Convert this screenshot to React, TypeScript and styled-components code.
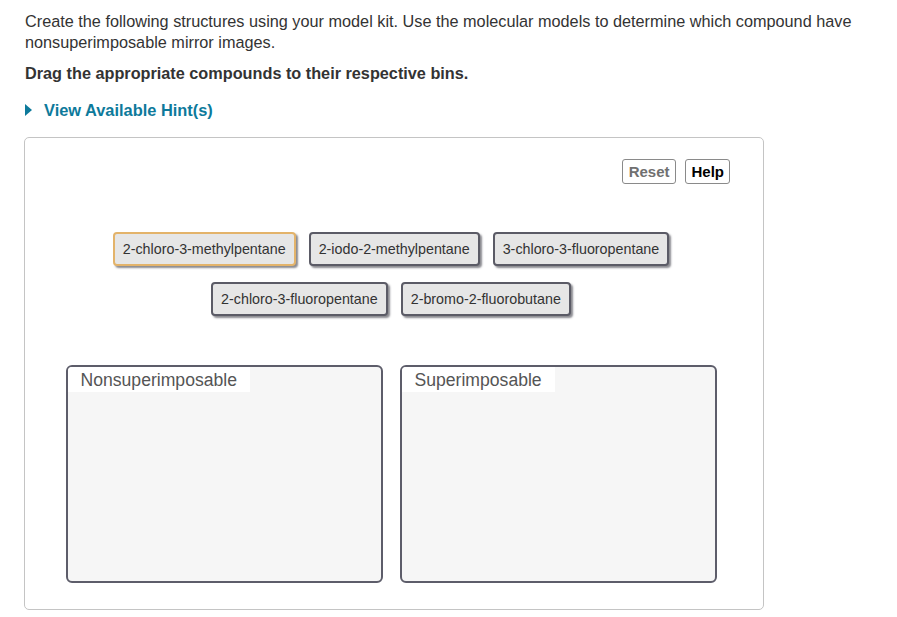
import React from 'react';
import styled, { createGlobalStyle } from 'styled-components';

const GlobalStyle = createGlobalStyle`
    body {
        margin: 0;
        background: #ffffff;
        font-family: "Liberation Sans", Arial, sans-serif;
        color: #333333;
    }
`

const Page = styled.div`
    padding: 11px 24px 8px 25px;
`

const Intro = styled.p`
    margin: 0;
    font-size: 16.25px;
    line-height: 21px;
    width: 840px;
`

const Instruction = styled.p`
    margin: 10px 0 0 0;
    font-size: 16.25px;
    font-weight: bold;
    line-height: 21px;
`

const Hint = styled.div`
    display: flex;
    align-items: center;
    gap: 12px;
    margin-top: 16px;
    color: #0d7a9b;
    font-size: 16.4px;
    font-weight: bold;
    line-height: 21px;
    cursor: pointer;
`

const Arrow = styled.span`
    width: 0;
    height: 0;
    border-top: 6px solid transparent;
    border-bottom: 6px solid transparent;
    border-left: 7px solid #0d7a9b;
    margin-top: -2px;
`

const Panel = styled.div`
    margin-top: 16px;
    margin-left: -1px;
    width: 738px;
    height: 471px;
    border: 1px solid #c4c4c4;
    border-radius: 5px;
    display: flex;
    flex-direction: column;
`

const Toolbar = styled.div`
    display: flex;
    justify-content: flex-end;
    gap: 9px;
    padding: 21px 33px 0 0;
`

const ToolButton = styled.button<{ $muted?: boolean }>`
    font-family: "Liberation Sans", Arial, sans-serif;
    font-size: 15px;
    font-weight: bold;
    color: ${({ $muted }) => ($muted ? '#707070' : '#000000')};
    background: #ffffff;
    border: 1px solid #8a8a8a;
    border-radius: 3px;
    height: 25px;
    padding: 0 ${({ $muted }) => ($muted ? '6px' : '5px')};
    line-height: 21px;
`

const Chips = styled.div`
    display: flex;
    flex-direction: column;
    align-items: center;
    gap: 16px;
    margin-top: 48px;
    padding-right: 6px;
`

const ChipRow = styled.div`
    display: flex;
    gap: 13px;
`

const Chip = styled.div<{ $selected?: boolean }>`
    font-size: 14.3px;
    line-height: 16px;
    color: #333333;
    background: #e6e6e6;
    border: 2px solid ${({ $selected }) => ($selected ? '#e3b36a' : '#5b5b66')};
    border-radius: 4px;
    padding: 7px 8px;
    box-shadow: 2px 2px 2px rgba(60, 60, 70, 0.6);
    cursor: grab;
    white-space: nowrap;
`

const Bins = styled.div`
    display: flex;
    justify-content: center;
    gap: 17px;
    margin-top: 49px;
    padding-right: 6px;
`

const Bin = styled.div`
    width: 313px;
    height: 214px;
    background: #f6f6f6;
    border: 2px solid #5d5d6a;
    border-radius: 6px;
`

const BinLabel = styled.div`
    display: inline-block;
    background: #ffffff;
    color: #555555;
    font-size: 17.6px;
    line-height: 23px;
    padding: 2px 13px 0 13px;
    border-top-left-radius: 4px;
`

const compounds = [
    ['2-chloro-3-methylpentane', '2-iodo-2-methylpentane', '3-chloro-3-fluoropentane'],
    ['2-chloro-3-fluoropentane', '2-bromo-2-fluorobutane'],
];

const App = () => {
    return <>
        <GlobalStyle />
        <Page>
            <Intro>
                Create the following structures using your model kit. Use the molecular models to determine which compound have nonsuperimposable mirror images.
            </Intro>
            <Instruction>Drag the appropriate compounds to their respective bins.</Instruction>
            <Hint><Arrow />View Available Hint(s)</Hint>
            <Panel>
                <Toolbar>
                    <ToolButton $muted>Reset</ToolButton>
                    <ToolButton>Help</ToolButton>
                </Toolbar>
                <Chips>
                    {compounds.map((row, r) =>
                        <ChipRow key={r}>
                            {row.map((name, i) =>
                                <Chip key={name} $selected={r === 0 && i === 0}>{name}</Chip>
                            )}
                        </ChipRow>
                    )}
                </Chips>
                <Bins>
                    <Bin><BinLabel>Nonsuperimposable</BinLabel></Bin>
                    <Bin><BinLabel>Superimposable</BinLabel></Bin>
                </Bins>
            </Panel>
        </Page>
    </>
}

export default App;
